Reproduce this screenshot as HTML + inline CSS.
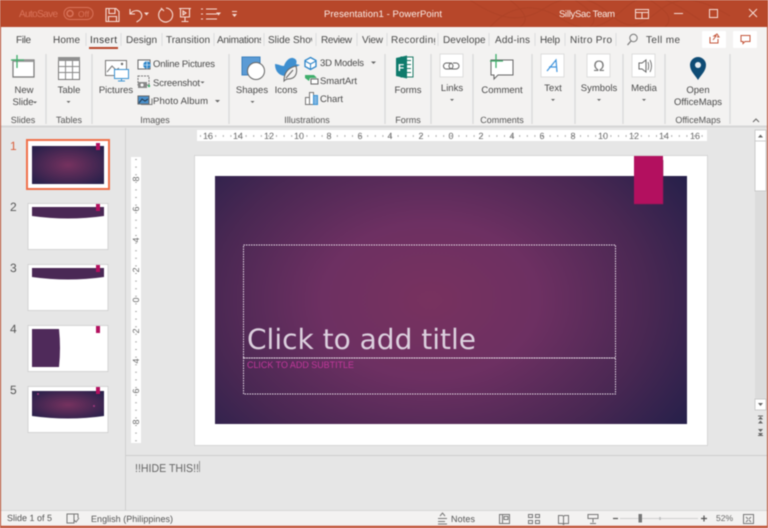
<!DOCTYPE html>
<html><head><meta charset="utf-8"><title>PowerPoint</title>
<style>
html,body{margin:0;padding:0;width:768px;height:528px;overflow:hidden;background:#e6e6e6}
svg{display:block;filter:blur(.45px)}
text{font-family:"Liberation Sans",sans-serif;font-size:9.5px;fill:#4a4a4a;text-rendering:geometricPrecision}
.c{text-anchor:middle}
.tab{font-size:10px;fill:#484848}
.g{font-size:9px;fill:#555;text-anchor:middle}
.r{font-size:9px;fill:#666;text-anchor:middle}
.wi{fill:none;stroke:#f6ddd5;stroke-width:1.1}
.sb{fill:none;stroke:#777;stroke-width:1}
</style></head><body>
<svg width="768" height="528" viewBox="0 0 768 528" xmlns="http://www.w3.org/2000/svg">
<defs>
<radialGradient id="pg" gradientUnits="userSpaceOnUse" cx="430" cy="300" r="310" gradientTransform="translate(430 300) scale(1 .72) translate(-430 -300)">
<stop offset="0" stop-color="#78325f"/><stop offset=".35" stop-color="#6d3062"/><stop offset=".7" stop-color="#4a2853"/><stop offset="1" stop-color="#25204a"/>
</radialGradient>
<radialGradient id="tg" cx=".5" cy=".5" r=".62"><stop offset="0" stop-color="#76325f"/><stop offset="1" stop-color="#2b214b"/></radialGradient>
</defs>

<!-- window -->
<rect width="768" height="528" fill="#e6e6e6"/>
<rect width="768" height="27" fill="#b7472a"/>
<g fill="none" stroke="#ae4327" stroke-width="1">
<path d="M470 0C500 20 520 24 545 8S590 -4 610 14 640 26 660 10 700 -2 730 16"/>
<path d="M490 27C510 5 535 2 560 18S600 30 625 8 670 0 700 20"/>
<path d="M510 0C525 12 530 20 520 27M575 0C590 10 600 18 590 27M650 0C665 10 675 18 665 27"/>
</g>
<!-- title bar -->
<text x="19" y="17" style="fill:#d9735a;font-size:10px" textLength="39">AutoSave</text>
<rect x="64" y="7.500" width="29" height="12" rx="6" fill="none" stroke="#d9735a"/>
<circle cx="70" cy="13.500" r="3" fill="none" stroke="#d9735a" stroke-width="1.500"/>
<text x="78" y="17" style="fill:#d9735a;font-size:8.500px">Off</text>
<g class="wi">
<path d="M106 8.500h10l3 3v10h-13zM109 8.500v5h6v-5M108.500 21.500v-5h8v5"/>
<path d="M130 9v5h5M130.500 14c2-4 9-5 11 0 1 3-1 6-5 8"/>
<path d="M166 8a7 7 0 1 1-4 1M161 8l3 3"/>
<path d="M179 8.500h12M180.500 9v8h9v-8M185 17v4M181.500 21.500h7M183 11l3 2-3 2z"/>
<path d="M206 9h11M206 14h11M206 19h11" />
<path d="M201 9h2M201 14h2M201 19h2" />
</g>
<path d="M144 12.500h5l-2.500 3zM216 12.500h5l-2.500 3zM232 14h5l-2.500 3z" fill="#f6ddd5"/>
<path d="M232 11.500h5" stroke="#f6ddd5"/>
<text x="324" y="17" style="fill:#fbeee9;font-size:9.500px" textLength="118">Presentation1  -  PowerPoint</text>
<text x="559" y="17" style="fill:#fbeee9;font-size:9.500px" textLength="56">SillySac Team</text>
<g fill="none" stroke="#f6ddd5">
<path d="M635.500 9.500h13v9h-13zM635.500 12.500h13M642 12.500v6"/>
<path d="M674 13.500h9"/>
<path d="M709.500 9.500h8v8h-8z"/>
<path d="M749 9l8 8M757 9l-8 8"/>
</g>

<!-- tabs and ribbon -->
<rect x="1" y="27" width="766" height="99" fill="#f3f2f1"/>
<text class="tab" x="16" y="43" textLength="15">File</text>
<text class="tab" x="53" y="43" textLength="27">Home</text>
<text class="tab" x="90" y="43" textLength="27" style="fill:#333">Insert</text>
<rect x="89" y="47" width="29" height="2" fill="#b7472a"/>
<text class="tab" x="126" y="43" textLength="31">Design</text>
<text class="tab" x="166" y="43" textLength="44">Transition</text>
<text class="tab" x="217" y="43" textLength="47">Animations</text>
<rect x="261" y="32" width="7" height="14" fill="#f3f2f1"/>
<text class="tab" x="268" y="43" textLength="50">Slide Show</text>
<rect x="312" y="32" width="8" height="14" fill="#f3f2f1"/>
<text class="tab" x="321" y="43" textLength="31">Review</text>
<text class="tab" x="362" y="43" textLength="21">View</text>
<text class="tab" x="391" y="43" textLength="48">Recording</text>
<rect x="435" y="32" width="7" height="14" fill="#f3f2f1"/>
<text class="tab" x="443" y="43" textLength="46">Developer</text>
<rect x="485" y="32" width="9" height="14" fill="#f3f2f1"/>
<text class="tab" x="495" y="43" textLength="35">Add-ins</text>
<text class="tab" x="540" y="43" textLength="20">Help</text>
<text class="tab" x="570" y="43" textLength="42">Nitro Pro</text>
<text class="tab" x="646" y="43" textLength="34">Tell me</text>
<path d="M86 33v13M121 33v13M162 33v13M214 33v13M264 33v13M316 33v13M357 33v13M387 33v13M438 33v13M489 33v13M535 33v13M565 33v13M616 33v13" stroke="#dcdcdc"/>
<circle cx="633.500" cy="38" r="3.700" fill="none" stroke="#777"/><path d="M631 41l-3.500 4" stroke="#777" stroke-width="1.200"/>
<rect x="702" y="31" width="24" height="17" rx="1" fill="#fff"/>
<rect x="733" y="31" width="24" height="17" rx="1" fill="#fff"/>
<path d="M710 37v6h8v-4M713 40l3-4h-2l3-2 2 3h-2" fill="none" stroke="#c4553a"/>
<path d="M741 35.500h9v6h-5l-2 2v-2h-2z" fill="none" stroke="#c4553a"/>

<!-- group separators -->
<path d="M46 54v70M92 54v70M229 54v70M385 54v70M431 54v70M473 54v70M532 54v70M575 54v70M623 54v70M665 54v70M730 54v70" stroke="#d8d8d8" stroke-width="1.200"/>

<!-- New Slide -->
<path d="M13 60h21v17H13z" fill="#fff" stroke="#777" stroke-width="1.200"/><path d="M13 60h21v2H13z" fill="#999"/>
<path d="M17 55v13M11 60h13" stroke="#3fae6b" stroke-width="1.300"/>
<text class="c" x="24" y="93">New</text><text class="c" x="23" y="105">Slide</text>
<path d="M33 101.500h4l-2 2z" fill="#666"/>
<text class="g" x="23" y="123">Slides</text>
<!-- Table -->
<path d="M58.500 57.500h21v22h-21z" fill="#fff" stroke="#777"/><path d="M58 57h22v4H58z" fill="#8f8f8f"/>
<path d="M58.500 66.500h21M58.500 72.500h21M65.500 61v18M72.500 61v18" stroke="#888"/>
<text class="c" x="69" y="93">Table</text>
<path d="M66.500 101h4l-2 2z" fill="#666"/>
<text class="g" x="69" y="123">Tables</text>
<!-- Pictures -->
<path d="M105.500 60.500h21v15h-21z" fill="#fff" stroke="#777"/><path d="M107 72l5-6 4 4 3-2" fill="none" stroke="#777"/><circle cx="122" cy="64" r="1.200" fill="#666"/>
<path d="M114.500 69.500h14v9h-14z" fill="#fff" stroke="#3b93d3"/><path d="M121.500 78.500v2M118 81h7" stroke="#3b93d3"/>
<text class="c" x="116" y="93">Pictures</text>
<path d="M138 60h12v9h-12z" fill="#fff" stroke="#666"/><circle cx="147" cy="65" r="3.800" fill="#2f86c9"/><path d="M143 65h8M147 61v8" stroke="#fff" stroke-width=".6"/>
<text x="153" y="67" textLength="62">Online Pictures</text>
<path d="M138 76h11v9h-11z" fill="none" stroke="#777" stroke-dasharray="2 1"/><path d="M138 82h9v6h-9z" fill="#888"/><circle cx="142" cy="85" r="1.500" fill="#fff"/><circle cx="149" cy="86" r="1.200" fill="#3fae6b"/>
<text x="153" y="86" textLength="47">Screenshot</text><path d="M200.500 81.500h4l-2 2z" fill="#666"/>
<path d="M138 96h11v8h-11z" fill="#4a8fca" stroke="#666"/><path d="M139 103l3-4 3 2 3-2" fill="none" stroke="#234"/><path d="M141 104.500h11v-6" fill="none" stroke="#777"/>
<text x="153" y="104" textLength="55">Photo Album</text><path d="M215 100h5l-2.500 2.500z" fill="#666"/>
<text class="g" x="155" y="123">Images</text>
<!-- Shapes -->
<rect x="242" y="57" width="18" height="18" fill="#5b9bd5" stroke="#3b7fbd"/>
<circle cx="256" cy="71" r="8.500" fill="#fff" stroke="#666"/>
<text class="c" x="252" y="93">Shapes</text><path d="M250.500 101h4l-2 2z" fill="#666"/>
<!-- Icons -->
<path d="M275 64c3 0 6 2 9 2 1-4 5-9 9-8s4 4 3 6l4 1-4 2c-1 4-5 6-8 7l-2 2c-6 0-11-4-11-12z" fill="#3e8fd0"/>
<path d="M284 81c0-7 3-13 12-15 2 8-1 13-8 13-2 0-3 1-4 2z" fill="#f3f2f1" stroke="#666"/><path d="M286 78l7-8" stroke="#666"/>
<text class="c" x="286" y="93">Icons</text>
<path d="M310.500 57.500l5.500 3v6l-5.500 3-5.500-3v-6z" fill="#fff" stroke="#2f86c9" stroke-width="1.300"/><path d="M305 61l5.500 3 5.500-3M310.500 64v5" stroke="#2f86c9" fill="none"/>
<text x="320" y="66" textLength="44">3D Models</text><path d="M371 61.500h5l-2.500 2.500z" fill="#666"/>
<path d="M305 75h9l3 3h-7l-1 3-4-3z" fill="#3fae6b"/><path d="M311 79h7v5h-7z" fill="#fff" stroke="#666"/>
<text x="320" y="84" textLength="37">SmartArt</text>
<path d="M305.500 97.500h4v7h-4z" fill="#fff" stroke="#777"/><path d="M309.500 92.500h4v12h-4z" fill="#fff" stroke="#777"/><path d="M313.500 95.500h4v9h-4z" fill="#7fb5e2" stroke="#3b93d3"/>
<text x="320" y="102" textLength="23">Chart</text>
<text class="g" x="307" y="123">Illustrations</text>
<!-- Forms -->
<path d="M401 57h12v20h-12z" fill="#fff" stroke="#1f7a66"/><path d="M403 60.500h8M403 64.500h8M403 68.500h8M403 72.500h8" stroke="#1f7a66"/>
<path d="M396 58l11-2.500v23L396 76z" fill="#0f7b6c"/>
<text x="398" y="71" style="fill:#fff;font-weight:bold;font-size:10px">F</text>
<text class="c" x="408" y="93">Forms</text>
<text class="g" x="408" y="123">Forms</text>
<!-- Links -->
<rect x="440" y="54" width="23" height="23" fill="#fff" stroke="#ddd"/>
<path d="M446 63h4a3 3 0 0 1 0 6h-3a3 3 0 0 1-1-6zM453 63h3a3 3 0 0 1 0 6h-4a3 3 0 0 1 0-6" fill="none" stroke="#666"/>
<text class="c" x="452" y="91">Links</text><path d="M450 99h4l-2 2z" fill="#666"/>
<!-- Comment -->
<path d="M491 60h22v15h-15l-4 4v-4h-3z" fill="#fff" stroke="#666"/>
<path d="M496 54v14M490 61h13" stroke="#3fae6b" stroke-width="1.300"/>
<text class="c" x="502" y="93">Comment</text>
<text class="g" x="502" y="123">Comments</text>
<!-- Text -->
<rect x="541" y="54" width="23" height="23" fill="#fff" stroke="#ddd"/>
<path d="M547 71l9-11 1 12M549 67h8" fill="none" stroke="#3e93dc" stroke-width="1.200"/>
<text class="c" x="553" y="91">Text</text><path d="M551 99h4l-2 2z" fill="#666"/>
<!-- Symbols -->
<rect x="587" y="54" width="23" height="23" fill="#fff" stroke="#ddd"/>
<text class="c" x="599" y="71" style="font-size:15px;fill:#777">Ω</text>
<text class="c" x="599" y="91">Symbols</text><path d="M597 99h4l-2 2z" fill="#666"/>
<!-- Media -->
<rect x="632" y="54" width="23" height="23" fill="#fff" stroke="#ddd"/>
<path d="M639 63h3l4-3v12l-4-3h-3z" fill="#fff" stroke="#666"/><path d="M648 62c1 3 1 5 0 8M650 60c2 4 2 8 0 12" fill="none" stroke="#777"/>
<text class="c" x="644" y="91">Media</text><path d="M642 99h4l-2 2z" fill="#666"/>
<!-- OfficeMaps -->
<path d="M698 80c-3-5-8-9-8-15a8 8 0 0 1 16 0c0 6-5 10-8 15z" fill="#0f4c75"/><circle cx="698" cy="65" r="3" fill="#e8eef2"/>
<text class="c" x="698" y="93">Open</text><text class="c" x="698" y="105" textLength="48">OfficeMaps</text>
<text class="g" x="698" y="123">OfficeMaps</text>
<path d="M753 122l3-3 3 3" fill="none" stroke="#666"/>

<!-- workspace -->
<path d="M0 126.500h768" stroke="#d6d6d6" stroke-width="2"/>
<path d="M125.500 128v382" stroke="#d0d0d0"/>
<path d="M126 455.500h642" stroke="#cecece"/>

<!-- thumbnails -->
<text x="10" y="150" style="font-size:12px;fill:#d9603d">1</text>
<text x="10" y="211" style="font-size:12px;fill:#555">2</text>
<text x="10" y="272" style="font-size:12px;fill:#555">3</text>
<text x="10" y="333" style="font-size:12px;fill:#555">4</text>
<text x="10" y="394" style="font-size:12px;fill:#555">5</text>
<rect x="27" y="140" width="82" height="49" fill="#fff" stroke="#f0704a" stroke-width="2"/>
<rect x="32" y="146" width="72" height="38" fill="url(#tg)"/>
<rect x="96" y="143" width="4" height="7" fill="#b3105f"/>
<g fill="#fff" stroke="#d4d4d4">
<rect x="28" y="203.500" width="80" height="46"/>
<rect x="28" y="264.500" width="80" height="46"/>
<rect x="28" y="325.500" width="80" height="46"/>
<rect x="28" y="386.500" width="80" height="46"/>
</g>
<path d="M32 207h72v9q-36 5-72 0z" fill="#4a2855"/><rect x="96" y="204" width="4" height="7" fill="#b3105f"/>
<path d="M32 268h72v9q-36 5-72 0z" fill="#4a2855"/><rect x="96" y="265" width="4" height="7" fill="#b3105f"/>
<path d="M32 329h27q2 19 0 38H32z" fill="#4f2a5a"/><rect x="96" y="326" width="4" height="7" fill="#b3105f"/>
<path d="M32 391h72v25q-36 5-72 0z" fill="url(#tg)"/><rect x="96" y="387" width="4" height="7" fill="#b3105f"/>
<circle cx="38" cy="394" r="1" fill="#a33a80"/><circle cx="94" cy="406" r="1" fill="#a33a80"/>

<!-- rulers -->
<rect x="197" y="130" width="510" height="11" fill="#fff"/>
<path d="M200 136h505" stroke="#999" stroke-width="1.500" stroke-dasharray="1 6.600"/>
<text class="r" x="208" y="139">16</text><text class="r" x="238" y="139">14</text><text class="r" x="269" y="139">12</text><text class="r" x="299" y="139">10</text><text class="r" x="329" y="139">8</text><text class="r" x="360" y="139">6</text><text class="r" x="390" y="139">4</text><text class="r" x="421" y="139">2</text><text class="r" x="451" y="139">0</text><text class="r" x="481" y="139">2</text><text class="r" x="512" y="139">4</text><text class="r" x="542" y="139">6</text><text class="r" x="573" y="139">8</text><text class="r" x="603" y="139">10</text><text class="r" x="634" y="139">12</text><text class="r" x="664" y="139">14</text><text class="r" x="695" y="139">16</text>
<rect x="131" y="157" width="10" height="286" fill="#fff"/>
<path d="M136 159v283" stroke="#999" stroke-width="1.500" stroke-dasharray="1 6.600"/>
<text class="r" transform="translate(139 179) rotate(-90)">8</text>
<text class="r" transform="translate(139 209) rotate(-90)">6</text>
<text class="r" transform="translate(139 240) rotate(-90)">4</text>
<text class="r" transform="translate(139 270) rotate(-90)">2</text>
<text class="r" transform="translate(139 300) rotate(-90)">0</text>
<text class="r" transform="translate(139 331) rotate(-90)">2</text>
<text class="r" transform="translate(139 361) rotate(-90)">4</text>
<text class="r" transform="translate(139 391) rotate(-90)">6</text>
<text class="r" transform="translate(139 422) rotate(-90)">8</text>

<!-- slide -->
<rect x="194.500" y="155.500" width="513" height="290" fill="#fff" stroke="#d6d6d6"/>
<rect x="215" y="176" width="472" height="248" fill="url(#pg)"/>
<rect x="634" y="156" width="29" height="48" fill="#b3105f"/>
<path d="M663 160v44h-29" fill="none" stroke="#8c1a55" stroke-width=".6"/>
<g fill="none" stroke="#e6dbe6" stroke-width="1" stroke-dasharray="1.500 1">
<rect x="243.500" y="245" width="372" height="113"/>
<rect x="243.500" y="358" width="372" height="36"/>
</g>
<text x="247" y="349" style="font-family:'DejaVu Sans',sans-serif;font-size:28px;fill:#dcd0de" textLength="229" lengthAdjust="spacingAndGlyphs">Click to add title</text>
<text x="247" y="368" style="font-size:9.500px;fill:#c0379a" textLength="107" lengthAdjust="spacingAndGlyphs">CLICK TO ADD SUBTITLE</text>

<!-- scrollbar -->
<rect x="755" y="130" width="12" height="280" fill="#dcdcdc"/>
<rect x="755" y="130" width="11" height="11" fill="#fff" stroke="#ccc"/>
<rect x="755" y="141" width="11" height="50" fill="#fff" stroke="#ccc"/>
<rect x="755" y="399" width="11" height="11" fill="#fff" stroke="#ccc"/>
<path d="M758 137.500h5l-2.500-3zM758 403h5l-2.500 3z" fill="#666"/>
<path d="M758 419.500h5l-2.500-3zM758 423.500h5l-2.500-3zM758 429h5l-2.500 3zM758 433h5l-2.500 3z" fill="#666"/>
<path d="M758 416h5M758 435.500h5" stroke="#666"/>

<!-- notes -->
<text x="135" y="472" style="font-size:11.500px;fill:#666" textLength="64" lengthAdjust="spacingAndGlyphs">!!HIDE THIS!!</text>
<path d="M199.500 461v11" stroke="#999"/>

<!-- status bar -->
<rect x="1" y="510" width="766" height="16" fill="#f3f2f1"/>
<path d="M0 510.500h768" stroke="#d6d6d6"/>
<text x="7" y="521" style="font-size:9px;fill:#555" textLength="45">Slide 1 of 5</text>
<path d="M67 514h7v9h-7zM74 514h4v4M74 520l2 2 3-4" class="sb"/>
<text x="91" y="522" style="font-size:9px;fill:#555" textLength="82">English (Philippines)</text>
<path d="M438 518.500h9M438 521.500h7M438 524h9M440 516l2.500-3 2.500 3" class="sb"/>
<text x="451" y="522" style="font-size:9px;fill:#555" textLength="24">Notes</text>
<path d="M499.500 514.500h10v9h-10zM502.500 514.500v9M504 516.500h4v3h-4z" class="sb"/>
<path d="M528.500 514.500h4v3h-4zM535.500 514.500h4v3h-4zM528.500 520.500h4v3h-4zM535.500 520.500h4v3h-4z" class="sb"/>
<path d="M558.500 515.500h4l1 1 1-1h4v8h-4l-1 1-1-1h-4zM563.500 516v8" class="sb"/>
<path d="M588 514.500h10v4h-10zM593 518.500v4M590 523.500h6" class="sb"/>
<path d="M613 518.500h5" stroke="#555" stroke-width="1.200"/>
<path d="M620 518.500h78" stroke="#cfcfcf"/><path d="M660 517v3" stroke="#bbb" stroke-width="1.500"/>
<rect x="638.500" y="514" width="3.500" height="8.500" fill="#777"/>
<path d="M701 518.500h6M704 515.500v6" stroke="#555" stroke-width="1.200"/>
<text x="716" y="521" style="font-size:8.500px;fill:#666" textLength="17">52%</text>
<path d="M743.500 514.500h10v9h-10zM746 517l2 2M751 517l-2 2M746 522l2-2M751 522l-2-2" class="sb"/>

<!-- outer window border -->
<path d="M.5 27v500.500h767V27" fill="none" stroke="#b7472a"/>
<path d="M0 526.500h768" stroke="#c4553a" stroke-width="1.500"/>
</svg>
</body></html>
